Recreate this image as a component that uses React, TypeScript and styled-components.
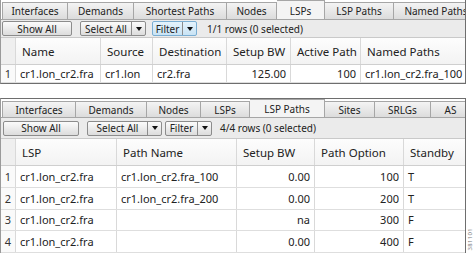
import styled, { createGlobalStyle } from 'styled-components';

const GlobalStyle = createGlobalStyle`
  body {
    margin: 0;
    background: #fff;
    font-family: "Noto Sans", "DejaVu Sans", sans-serif;
    color: #1f1f1f;
  }
`;

type TabDef = { label: string; w: number; active?: boolean };
type ColDef = { title: string; w: string; right?: boolean };

const topTabs: TabDef[] = [
  { label: 'Interfaces', w: 66 },
  { label: 'Demands', w: 66 },
  { label: 'Shortest Paths', w: 93 },
  { label: 'Nodes', w: 50 },
  { label: 'LSPs', w: 48, active: true },
  { label: 'LSP Paths', w: 69 },
  { label: 'Named Paths', w: 85 },
];

const bottomTabs: TabDef[] = [
  { label: 'Interfaces', w: 74 },
  { label: 'Demands', w: 71 },
  { label: 'Nodes', w: 54 },
  { label: 'LSPs', w: 49 },
  { label: 'LSP Paths', w: 75, active: true },
  { label: 'Sites', w: 50 },
  { label: 'SRLGs', w: 56 },
  { label: 'AS', w: 40 },
];

const lspCols: ColDef[] = [
  { title: 'Name', w: '85px' },
  { title: 'Source', w: '52px' },
  { title: 'Destination', w: '74px' },
  { title: 'Setup BW', w: '64px', right: true },
  { title: 'Active Path', w: '70px', right: true },
  { title: 'Named Paths', w: '1fr' },
];

const lspRows = [['cr1.lon_cr2.fra', 'cr1.lon', 'cr2.fra', '125.00', '100', 'cr1.lon_cr2.fra_100']];

const pathCols: ColDef[] = [
  { title: 'LSP', w: '101px' },
  { title: 'Path Name', w: '120px' },
  { title: 'Setup BW', w: '78px', right: true },
  { title: 'Path Option', w: '89px', right: true },
  { title: 'Standby', w: '1fr' },
];

const pathRows = [
  ['cr1.lon_cr2.fra', 'cr1.lon_cr2.fra_100', '0.00', '100', 'T'],
  ['cr1.lon_cr2.fra', 'cr1.lon_cr2.fra_200', '0.00', '200', 'T'],
  ['cr1.lon_cr2.fra', '', 'na', '300', 'F'],
  ['cr1.lon_cr2.fra', '', '0.00', '400', 'F'],
];

const Page = styled.div`
  display: flex;
  width: 474px;
  height: 253px;
  overflow: hidden;
`;

const Stack = styled.div`
  width: 466px;
  display: flex;
  flex-direction: column;
  gap: 14px;
`;

const Panel = styled.div<{ $first?: boolean }>`
  display: flex;
  flex-direction: column;
  box-sizing: border-box;
  border: 1px solid #6e6e6e;
  border-left-color: #9a9a9a;
  border-top: ${(p) => (p.$first ? 'none' : '1px solid #6e6e6e')};
  border-bottom: ${(p) => (p.$first ? '1px solid #6e6e6e' : 'none')};
  overflow: hidden;
`;

const TabBar = styled.div<{ $h: number }>`
  flex: none;
  height: ${(p) => p.$h}px;
  display: flex;
  align-items: flex-end;
  padding-left: 1px;
  box-sizing: border-box;
  border-bottom: 1px solid #a6a6a6;
  overflow: hidden;
`;

const Tab = styled.div<{ $w: number; $active?: boolean }>`
  flex: none;
  width: ${(p) => p.$w}px;
  height: ${(p) => (p.$active ? 'calc(100% + 1px)' : 'calc(100% - 2px)')};
  margin-bottom: ${(p) => (p.$active ? '-1px' : '0')};
  box-sizing: border-box;
  display: flex;
  align-items: center;
  justify-content: center;
  white-space: nowrap;
  font-size: 10px;
  color: #222;
  border-top: 1px solid #a6a6a6;
  border-right: 1px solid #a6a6a6;
  background: ${(p) => (p.$active ? '#f4f4f4' : 'linear-gradient(#f4f4f4, #dcdcdc)')};
  &:first-child {
    border-left: 1px solid #a6a6a6;
  }
`;

const Toolbar = styled.div<{ $h: number }>`
  flex: none;
  height: ${(p) => p.$h}px;
  display: flex;
  align-items: center;
  background: #ebebeb;
  border-bottom: 1px solid #c9c9c9;
  box-sizing: border-box;
  font-size: 10px;
`;

const Button = styled.div<{ $w: number; $ml: number; $hl?: boolean }>`
  flex: none;
  width: ${(p) => p.$w}px;
  height: 15px;
  margin-left: ${(p) => p.$ml}px;
  box-sizing: border-box;
  display: flex;
  align-items: stretch;
  border: 1px solid ${(p) => (p.$hl ? '#7aaed3' : '#8c8c8c')};
  border-radius: 2px;
  background: ${(p) => (p.$hl ? 'linear-gradient(#e4f3fc, #c9e3f4)' : 'linear-gradient(#fbfbfb, #dcdcdc)')};
  font-size: 10px;
  color: #222;
`;

const ButtonLabel = styled.span`
  flex: 1;
  display: flex;
  align-items: center;
  justify-content: center;
  white-space: nowrap;
`;

const ArrowBox = styled.span`
  flex: none;
  width: 13px;
  display: flex;
  align-items: center;
  justify-content: center;
  border-left: 1px solid #8c8c8c;
  &::after {
    content: '';
    border-left: 3.5px solid transparent;
    border-right: 3.5px solid transparent;
    border-top: 4px solid #111;
  }
`;

const Status = styled.span<{ $ml: number }>`
  margin-left: ${(p) => p.$ml}px;
  white-space: nowrap;
  color: #222;
`;

const Row = styled.div<{ $cols: string; $h: number; $head?: boolean }>`
  flex: none;
  display: grid;
  grid-template-columns: ${(p) => p.$cols};
  height: ${(p) => p.$h}px;
  background: ${(p) => (p.$head ? 'linear-gradient(#fdfdfd, #f3f3f3)' : '#fff')};
  border-bottom: 1px solid ${(p) => (p.$head ? '#cfcfcf' : '#dedede')};
  box-sizing: border-box;
  font-size: ${(p) => (p.$head ? '11.5px' : '11px')};
`;

const Cell = styled.div<{ $right?: boolean; $pad: number }>`
  display: flex;
  align-items: center;
  justify-content: ${(p) => (p.$right ? 'flex-end' : 'flex-start')};
  padding: 0 ${(p) => p.$pad}px;
  border-right: 1px solid #d9d9d9;
  white-space: nowrap;
  overflow: hidden;
  color: #222;
  &:last-child {
    border-right: none;
  }
`;

const NumCell = styled.div<{ $head?: boolean }>`
  display: flex;
  align-items: center;
  justify-content: center;
  background: ${(p) => (p.$head ? '#efefef' : '#fafafa')};
  border-right: 1px solid #d9d9d9;
  color: #333;
`;

const SideLabel = styled.div`
  align-self: flex-end;
  margin: 0 0 3px 1px;
  writing-mode: vertical-rl;
  transform: rotate(180deg);
  font-size: 6px;
  line-height: 1;
  letter-spacing: 0.3px;
  color: #777;
`;

function Tabs({ tabs, h }: { tabs: TabDef[]; h: number }) {
  return (
    <TabBar $h={h}>
      {tabs.map((t) => (
        <Tab key={t.label} $w={t.w} $active={t.active}>
          {t.label}
        </Tab>
      ))}
    </TabBar>
  );
}

function Grid({
  cols,
  rows,
  headH,
  rowH,
}: {
  cols: ColDef[];
  rows: string[][];
  headH: number;
  rowH: number;
}) {
  const template = ['15px', ...cols.map((c) => c.w)].join(' ');
  return (
    <>
      <Row $cols={template} $h={headH} $head>
        <NumCell $head />
        {cols.map((c) => (
          <Cell key={c.title} $pad={6}>
            {c.title}
          </Cell>
        ))}
      </Row>
      {rows.map((r, i) => (
        <Row key={i} $cols={template} $h={rowH}>
          <NumCell>{i + 1}</NumCell>
          {r.map((v, j) => (
            <Cell key={j} $pad={4} $right={cols[j].right}>
              {v}
            </Cell>
          ))}
        </Row>
      ))}
    </>
  );
}

export default function App() {
  return (
    <>
      <GlobalStyle />
      <Page>
        <Stack>
          <Panel $first>
            <Tabs tabs={topTabs} h={20} />
            <Toolbar $h={18}>
              <Button $w={70} $ml={1}>
                <ButtonLabel>Show All</ButtonLabel>
              </Button>
              <Button $w={66} $ml={8}>
                <ButtonLabel>Select All</ButtonLabel>
                <ArrowBox />
              </Button>
              <Button $w={45} $ml={6} $hl>
                <ButtonLabel>Filter</ButtonLabel>
                <ArrowBox />
              </Button>
              <Status $ml={10}>1/1 rows (0 selected)</Status>
            </Toolbar>
            <Grid cols={lspCols} rows={lspRows} headH={27} rowH={18} />
          </Panel>
          <Panel>
            <Tabs tabs={bottomTabs} h={19} />
            <Toolbar $h={21}>
              <Button $w={76} $ml={2}>
                <ButtonLabel>Show All</ButtonLabel>
              </Button>
              <Button $w={75} $ml={8}>
                <ButtonLabel>Select All</ButtonLabel>
                <ArrowBox />
              </Button>
              <Button $w={47} $ml={3}>
                <ButtonLabel>Filter</ButtonLabel>
                <ArrowBox />
              </Button>
              <Status $ml={8}>4/4 rows (0 selected)</Status>
            </Toolbar>
            <Grid cols={pathCols} rows={pathRows} headH={27} rowH={21.75} />
          </Panel>
        </Stack>
        <SideLabel>381101</SideLabel>
      </Page>
    </>
  );
}
